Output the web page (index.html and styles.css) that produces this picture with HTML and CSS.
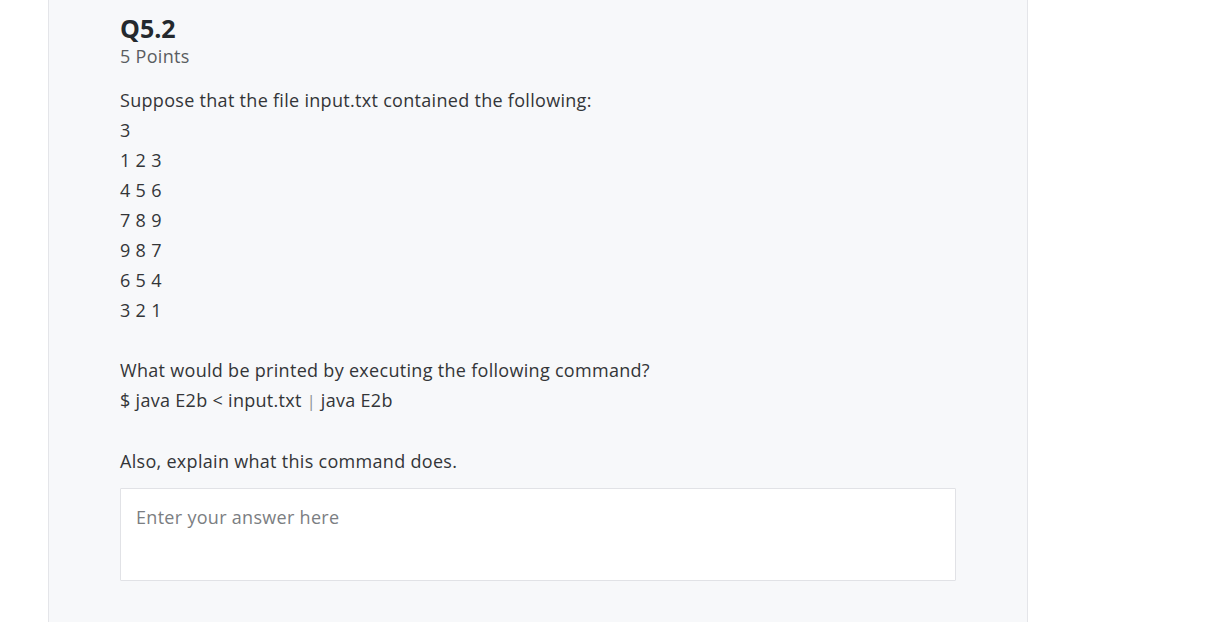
FILE: index.html
```html
<!DOCTYPE html>
<html>
<head>
<meta charset="utf-8">
<link rel="stylesheet" href="styles.css">
</head>
<body>
<div class="panel">
  <div class="question">
    <h2 class="title">Q5.2</h2>
    <div class="points">5 Points</div>
    <div class="prompt">
      <p>Suppose that the file input.txt contained the following:</p>
      <p>3</p>
      <p>1 2 3</p>
      <p>4 5 6</p>
      <p>7 8 9</p>
      <p>9 8 7</p>
      <p>6 5 4</p>
      <p>3 2 1</p>
      <p class="blank">&nbsp;</p>
      <p>What would be printed by executing the following command?</p>
      <p>$ java E2b &lt; input.txt <span class="pipe">|</span> java E2b</p>
      <p class="blank">&nbsp;</p>
      <p>Also, explain what this command does.</p>
    </div>
    <textarea class="answer" placeholder="Enter your answer here"></textarea>
  </div>
</div>
</body>
</html>
```

FILE: styles.css
```css
html, body {
  margin: 0;
  padding: 0;
  background: #ffffff;
  height: 100%;
}
body {
  font-family: "Open Sans", "Liberation Sans", sans-serif;
  color: #333538;
}
.panel {
  margin-left: 48px;
  width: 978px;
  min-height: 622px;
  background: #f7f8fa;
  border-left: 1px solid #e4e5e9;
  border-right: 1px solid #e4e5e9;
  box-sizing: content-box;
}
.question {
  padding: 12px 0 0 71px;
  width: 836px;
}
.title {
  margin: 0;
  font-size: 25px;
  font-weight: 700;
  line-height: 32px;
  color: #24292e;
  letter-spacing: 0;
}
.points {
  font-size: 18px;
  line-height: 24px;
  letter-spacing: 0.3px;
  color: #5a5d61;
  margin-top: 0;
}
.prompt {
  margin-top: 17px;
  font-size: 18px;
  line-height: 30px;
  letter-spacing: 0.3px;
  color: #333538;
}
.prompt p {
  margin: 0;
}
.pipe {
  color: #8a8d91;
  font-size: 16px;
}
.answer {
  display: block;
  margin-top: 12px;
  width: 836px;
  height: 93px;
  box-sizing: border-box;
  border: 1px solid #e1e2e6;
  border-radius: 1px;
  background: #ffffff;
  padding: 16px 15px;
  font-family: "Open Sans", "Liberation Sans", sans-serif;
  font-size: 18px;
  line-height: 24px;
  letter-spacing: 0.3px;
  resize: none;
  outline: none;
  color: #333538;
}
.answer::placeholder {
  color: #7b7e82;
}
```
